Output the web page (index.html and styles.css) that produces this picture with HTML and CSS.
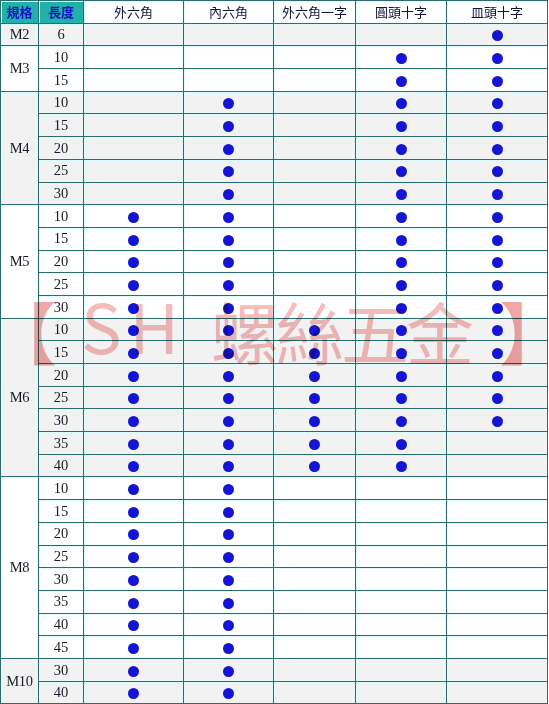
FILE: index.html
```html
<!DOCTYPE html>
<html lang="zh-Hant">
<head>
<meta charset="utf-8">
<title>SH 螺絲五金</title>
<link rel="stylesheet" href="styles.css">
</head>
<body>
<div class="page">
<table class="spec">
<colgroup>
<col class="c1"><col class="c2"><col class="c3"><col class="c4"><col class="c5"><col class="c6"><col class="c7">
</colgroup>
<thead>
<tr class="head"><th class="key">規格</th><th class="key">長度</th><th>外六角</th><th>內六角</th><th>外六角一字</th><th>圓頭十字</th><th>皿頭十字</th></tr>
</thead>
<tbody class="grp gray">
<tr><td class="size">M2</td><td class="len">6</td><td></td><td></td><td></td><td></td><td><span class="dot"></span></td></tr>
</tbody>
<tbody class="grp">
<tr><td class="size" rowspan="2">M3</td><td class="len">10</td><td></td><td></td><td></td><td><span class="dot"></span></td><td><span class="dot"></span></td></tr>
<tr><td class="len">15</td><td></td><td></td><td></td><td><span class="dot"></span></td><td><span class="dot"></span></td></tr>
</tbody>
<tbody class="grp gray">
<tr><td class="size" rowspan="5">M4</td><td class="len">10</td><td></td><td><span class="dot"></span></td><td></td><td><span class="dot"></span></td><td><span class="dot"></span></td></tr>
<tr><td class="len">15</td><td></td><td><span class="dot"></span></td><td></td><td><span class="dot"></span></td><td><span class="dot"></span></td></tr>
<tr><td class="len">20</td><td></td><td><span class="dot"></span></td><td></td><td><span class="dot"></span></td><td><span class="dot"></span></td></tr>
<tr><td class="len">25</td><td></td><td><span class="dot"></span></td><td></td><td><span class="dot"></span></td><td><span class="dot"></span></td></tr>
<tr><td class="len">30</td><td></td><td><span class="dot"></span></td><td></td><td><span class="dot"></span></td><td><span class="dot"></span></td></tr>
</tbody>
<tbody class="grp">
<tr><td class="size" rowspan="5">M5</td><td class="len">10</td><td><span class="dot"></span></td><td><span class="dot"></span></td><td></td><td><span class="dot"></span></td><td><span class="dot"></span></td></tr>
<tr><td class="len">15</td><td><span class="dot"></span></td><td><span class="dot"></span></td><td></td><td><span class="dot"></span></td><td><span class="dot"></span></td></tr>
<tr><td class="len">20</td><td><span class="dot"></span></td><td><span class="dot"></span></td><td></td><td><span class="dot"></span></td><td><span class="dot"></span></td></tr>
<tr><td class="len">25</td><td><span class="dot"></span></td><td><span class="dot"></span></td><td></td><td><span class="dot"></span></td><td><span class="dot"></span></td></tr>
<tr><td class="len">30</td><td><span class="dot"></span></td><td><span class="dot"></span></td><td></td><td><span class="dot"></span></td><td><span class="dot"></span></td></tr>
</tbody>
<tbody class="grp gray">
<tr><td class="size" rowspan="7">M6</td><td class="len">10</td><td><span class="dot"></span></td><td><span class="dot"></span></td><td><span class="dot"></span></td><td><span class="dot"></span></td><td><span class="dot"></span></td></tr>
<tr><td class="len">15</td><td><span class="dot"></span></td><td><span class="dot"></span></td><td><span class="dot"></span></td><td><span class="dot"></span></td><td><span class="dot"></span></td></tr>
<tr><td class="len">20</td><td><span class="dot"></span></td><td><span class="dot"></span></td><td><span class="dot"></span></td><td><span class="dot"></span></td><td><span class="dot"></span></td></tr>
<tr><td class="len">25</td><td><span class="dot"></span></td><td><span class="dot"></span></td><td><span class="dot"></span></td><td><span class="dot"></span></td><td><span class="dot"></span></td></tr>
<tr><td class="len">30</td><td><span class="dot"></span></td><td><span class="dot"></span></td><td><span class="dot"></span></td><td><span class="dot"></span></td><td><span class="dot"></span></td></tr>
<tr><td class="len">35</td><td><span class="dot"></span></td><td><span class="dot"></span></td><td><span class="dot"></span></td><td><span class="dot"></span></td><td></td></tr>
<tr><td class="len">40</td><td><span class="dot"></span></td><td><span class="dot"></span></td><td><span class="dot"></span></td><td><span class="dot"></span></td><td></td></tr>
</tbody>
<tbody class="grp">
<tr><td class="size" rowspan="8">M8</td><td class="len">10</td><td><span class="dot"></span></td><td><span class="dot"></span></td><td></td><td></td><td></td></tr>
<tr><td class="len">15</td><td><span class="dot"></span></td><td><span class="dot"></span></td><td></td><td></td><td></td></tr>
<tr><td class="len">20</td><td><span class="dot"></span></td><td><span class="dot"></span></td><td></td><td></td><td></td></tr>
<tr><td class="len">25</td><td><span class="dot"></span></td><td><span class="dot"></span></td><td></td><td></td><td></td></tr>
<tr><td class="len">30</td><td><span class="dot"></span></td><td><span class="dot"></span></td><td></td><td></td><td></td></tr>
<tr><td class="len">35</td><td><span class="dot"></span></td><td><span class="dot"></span></td><td></td><td></td><td></td></tr>
<tr><td class="len">40</td><td><span class="dot"></span></td><td><span class="dot"></span></td><td></td><td></td><td></td></tr>
<tr><td class="len">45</td><td><span class="dot"></span></td><td><span class="dot"></span></td><td></td><td></td><td></td></tr>
</tbody>
<tbody class="grp gray">
<tr><td class="size" rowspan="2">M10</td><td class="len">30</td><td><span class="dot"></span></td><td><span class="dot"></span></td><td></td><td></td><td></td></tr>
<tr><td class="len">40</td><td><span class="dot"></span></td><td><span class="dot"></span></td><td></td><td></td><td></td></tr>
</tbody>
</table>
<div class="watermark">
<span class="wm-br wm-open">【</span>
<span class="wm-lat wm-s">S</span>
<span class="wm-lat wm-h">H</span>
<span class="wm-cjk">螺絲五金</span>
<span class="wm-br wm-close">】</span>
</div>
</div>
</body>
</html>
```
FILE: styles.css
```css
html, body {
  margin: 0;
  padding: 0;
  background: #ffffff;
}
.page {
  position: relative;
  width: 549px;
  height: 704px;
  overflow: hidden;
}
.spec {
  border-collapse: collapse;
  table-layout: fixed;
  width: 547px;
  font-family: "Liberation Serif", "Noto Sans CJK TC", serif;
  color: #1a1a2a;
}
.c1 { width: 38px; }
.c2 { width: 45px; }
.c3 { width: 100px; }
.c4 { width: 90px; }
.c5 { width: 82px; }
.c6 { width: 91px; }
.c7 { width: 101px; }
.spec tr { height: 22.7px; }
.spec th, .spec td {
  border: 1px solid #2b6d6d;
  box-shadow: inset 1px 1px 0 #d8ffff;
  padding: 0;
  text-align: center;
  vertical-align: middle;
  line-height: 1;
}
.spec th {
  font-family: "Noto Sans CJK TC", sans-serif;
  font-weight: normal;
  font-size: 13px;
  color: #15153a;
  background: #ffffff;
}
.spec th.key {
  background: #22b0a8;
  color: #1212c8;
  font-weight: bold;
}
.gray td { background: #f2f2f2; }
.size, .len {
  font-size: 14.5px;
}
.size { letter-spacing: -0.3px; }
.dot {
  display: inline-block;
  width: 11px;
  height: 11px;
  border-radius: 50%;
  background: #1414d2;
  vertical-align: middle;
}
.watermark {
  position: absolute;
  left: 0;
  top: 297px;
  display: flex;
  align-items: flex-start;
  font-family: "Noto Sans CJK TC", sans-serif;
  font-size: 68px;
  line-height: 68px;
  white-space: nowrap;
  color: #f5bcbc;
  mix-blend-mode: multiply;
  pointer-events: none;
}
.wm-br { color: #f2a6a6; }
.wm-open { margin-left: -11px; }
.wm-s { margin-left: 24px; transform: translateY(-6px); }
.wm-h { margin-left: 8px; transform: translateY(-6px); }
.wm-cjk { margin-left: 32px; letter-spacing: -3px; }
.wm-close { margin-left: 28px; }
```
